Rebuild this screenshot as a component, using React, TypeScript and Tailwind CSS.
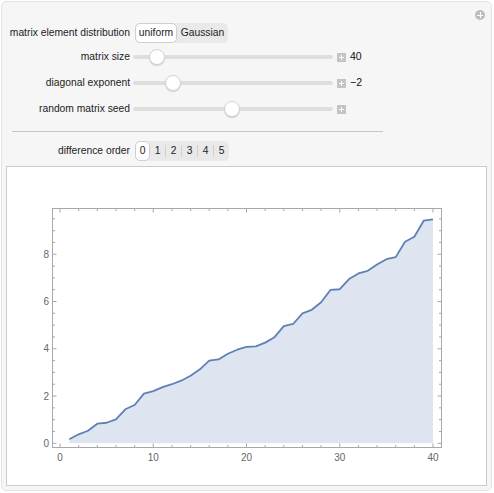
const data = [
  0.17, 0.38, 0.53, 0.83, 0.87, 1.01, 1.44, 1.62, 2.1, 2.21,
  2.38, 2.5, 2.65, 2.86, 3.13, 3.5, 3.55, 3.79, 3.96, 4.08,
  4.1, 4.26, 4.49, 4.96, 5.05, 5.5, 5.65, 5.97, 6.49, 6.52,
  6.95, 7.19, 7.3, 7.57, 7.79, 7.88, 8.53, 8.74, 9.42, 9.48,
];

const X = (x: number) => 60 + x * 9.325;
const Y = (y: number) => 443.3 - y * 23.63;

const frame = { l: 52.5, t: 208.5, r: 441.5, b: 447.5 };

function Label({ children }: { children: React.ReactNode }) {
  return (
    <div className="flex w-[120px] shrink-0 justify-end whitespace-nowrap text-[10.3px] text-[#222]">
      {children}
    </div>
  );
}

function PlusBox() {
  return (
    <div className="relative ml-[4px] h-[9px] w-[9px] bg-[#c4c4c4]">
      <div className="absolute left-[2px] top-[4px] h-[1px] w-[5px] bg-white" />
      <div className="absolute left-[4px] top-[2px] h-[5px] w-[1px] bg-white" />
    </div>
  );
}

function Slider({ pos, value }: { pos: number; value?: string }) {
  return (
    <div className="flex h-[16px] items-center">
      <div className="relative ml-[3px] h-[4px] w-[200px] rounded-full bg-[#dedede]">
        <div
          className="absolute top-[-6px] h-[16px] w-[16px] rounded-full border border-[#d4d4d4] bg-white shadow-[0_1px_1px_rgba(0,0,0,0.15)]"
          style={{ left: pos - 8 }}
        />
      </div>
      <PlusBox />
      {value && <span className="ml-[4px] text-[10.5px] text-[#111]">{value}</span>}
    </div>
  );
}

function Plot() {
  const line = data.map((v, i) => `${X(i + 1)},${Y(v)}`).join(" ");
  const area = `${X(1)},${Y(0)} ${line} ${X(40)},${Y(0)}`;
  const xMajor = [0, 10, 20, 30, 40];
  const xMinor = Array.from({ length: 21 }, (_, i) => i * 2).filter((v) => v % 10 !== 0);
  const yMajor = [0, 2, 4, 6, 8];
  const yMinor = Array.from({ length: 20 }, (_, i) => i * 0.5).filter((v) => v % 2 !== 0);
  const tick = "#a8a8a8";
  return (
    <svg width={479} height={318} viewBox="7 167 479 318" className="block">
      <polygon points={area} fill="#dfe5f0" />
      <polyline points={line} fill="none" stroke="#5e81b5" strokeWidth={1.8} strokeLinejoin="round" />
      <rect x={frame.l} y={frame.t} width={frame.r - frame.l} height={frame.b - frame.t} fill="none" stroke={tick} strokeWidth={1} />
      {xMajor.map((v) => (
        <g key={"xM" + v}>
          <line x1={X(v)} x2={X(v)} y1={frame.b} y2={frame.b - 4} stroke={tick} />
          <line x1={X(v)} x2={X(v)} y1={frame.t} y2={frame.t + 4} stroke={tick} />
          <text x={X(v)} y={461} textAnchor="middle" fontSize={10} fill="#666" fontFamily="Liberation Sans, Arial, sans-serif">
            {v}
          </text>
        </g>
      ))}
      {xMinor.map((v) => (
        <g key={"xm" + v}>
          <line x1={X(v)} x2={X(v)} y1={frame.b} y2={frame.b - 2.5} stroke={tick} />
          <line x1={X(v)} x2={X(v)} y1={frame.t} y2={frame.t + 2.5} stroke={tick} />
        </g>
      ))}
      {yMajor.map((v) => (
        <g key={"yM" + v}>
          <line x1={frame.l} x2={frame.l + 4} y1={Y(v)} y2={Y(v)} stroke={tick} />
          <line x1={frame.r} x2={frame.r - 4} y1={Y(v)} y2={Y(v)} stroke={tick} />
          <text x={49} y={Y(v) + 3.5} textAnchor="end" fontSize={10} fill="#666" fontFamily="Liberation Sans, Arial, sans-serif">
            {v}
          </text>
        </g>
      ))}
      {yMinor.map((v) => (
        <g key={"ym" + v}>
          <line x1={frame.l} x2={frame.l + 2.5} y1={Y(v)} y2={Y(v)} stroke={tick} />
          <line x1={frame.r} x2={frame.r - 2.5} y1={Y(v)} y2={Y(v)} stroke={tick} />
        </g>
      ))}
    </svg>
  );
}

export default function App() {
  const orders = ["0", "1", "2", "3", "4", "5"];
  return (
    <div className="h-[493px] w-[494px] bg-white p-[1px] font-['Liberation_Sans',Arial,sans-serif]">
      <div className="relative h-[490px] w-[491px] rounded-[5px] border border-[#e3e3e3] bg-[#f6f6f6]">
        <div className="absolute right-[6px] top-[8px] flex h-[10px] w-[10px] items-center justify-center rounded-full bg-[#bdbdbd]">
          <div className="absolute h-[1px] w-[6px] bg-white" />
          <div className="absolute h-[6px] w-[1px] bg-white" />
        </div>

        <div className="pl-[8px] pt-[21px]">
          <div className="flex h-[20px] items-center">
            <Label>matrix element distribution</Label>
            <div className="ml-[5px] flex h-[20px] items-center rounded-[5px] bg-[#e9e9e9] text-[10.3px] text-[#222]">
              <div className="flex h-[20px] w-[42px] items-center justify-center rounded-[5px] border border-[#cfcfcf] bg-white">uniform</div>
              <div className="flex h-[20px] w-[51px] items-center justify-center">Gaussian</div>
            </div>
          </div>

          <div className="mt-[6px] flex h-[16px] items-center">
            <Label>matrix size</Label>
            <Slider pos={24} value="40" />
          </div>
          <div className="mt-[10px] flex h-[16px] items-center">
            <Label>diagonal exponent</Label>
            <Slider pos={40} value="−2" />
          </div>
          <div className="mt-[10px] flex h-[16px] items-center">
            <Label>random matrix seed</Label>
            <Slider pos={99} />
          </div>
        </div>

        <div className="ml-[10px] mt-[14px] h-[1px] w-[371px] bg-[#c6c6c6]" />

        <div className="mt-[9px] flex h-[20px] items-center pl-[8px]">
          <Label>difference order</Label>
          <div className="ml-[5px] flex h-[20px] items-center rounded-[5px] bg-[#e9e9e9] text-[10.3px] text-[#222]">
            {orders.map((o, i) => (
              <div key={o} className="flex items-center">
                {i > 1 && <div className="h-[12px] w-[1px] bg-[#d0d0d0]" />}
                <div
                  className={
                    i === 0
                      ? "flex h-[20px] w-[15px] items-center justify-center rounded-[5px] border border-[#cfcfcf] bg-white"
                      : "flex h-[20px] w-[15px] items-center justify-center"
                  }
                >
                  {o}
                </div>
              </div>
            ))}
          </div>
        </div>

        <div className="ml-[4px] mt-[5px] h-[320px] w-[481px] border border-[#cbcbcb] bg-white">
          <Plot />
        </div>
      </div>
    </div>
  );
}
